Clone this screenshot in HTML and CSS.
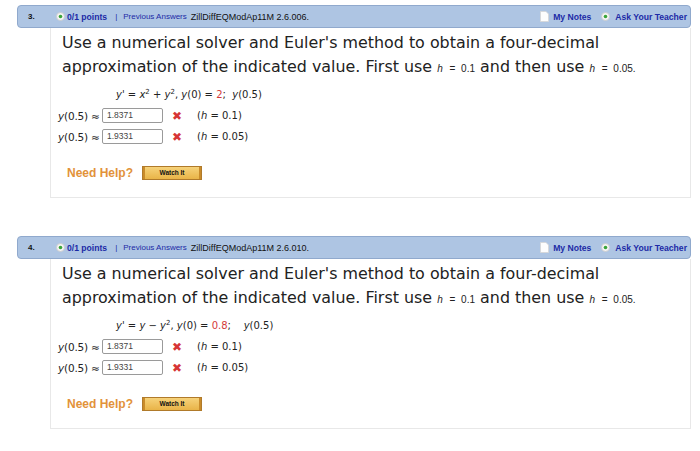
FILE: index.html
```html
<!DOCTYPE html>
<html>
<head>
<meta charset="utf-8">
<link rel="stylesheet" href="styles.css">
</head>
<body>
<div class="question q1">
  <div class="qhead">
    <span class="qnum">3.</span>
    <span class="dot"><svg width="9" height="9" viewBox="0 0 9 9"><circle cx="4.5" cy="4.5" r="4" fill="#f4f4f4" stroke="#c8c8c8" stroke-width="0.8"/><circle cx="4.5" cy="4.5" r="1.8" fill="#3aa53a"/></svg></span>
    <span class="pts">0/1 points</span>
    <span class="sep">|</span>
    <span class="prev">Previous Answers</span>
    <span class="code">ZillDiffEQModAp11M 2.6.006.</span>
    <span class="spacer"></span>
    <span class="note-ic"><svg width="9" height="11" viewBox="0 0 9 11"><path d="M0.5 0.5 H6 L8.5 3 V10.5 H0.5 Z" fill="#fdfdfd" stroke="#d6d6d6" stroke-width="0.8"/></svg></span>
    <span class="link">My Notes</span>
    <span class="dot dot2"><svg width="9" height="9" viewBox="0 0 9 9"><circle cx="4.5" cy="4.5" r="4" fill="#f4f4f4" stroke="#c8c8c8" stroke-width="0.8"/><circle cx="4.5" cy="4.5" r="1.8" fill="#3aa53a"/></svg></span>
    <span class="link">Ask Your Teacher</span>
  </div>
  <div class="qbody">
    <p class="prompt">Use a numerical solver and Euler's method to obtain a four-decimal approximation of the indicated value. First use <span class="hs"><span class="it">h</span> = 0.1</span> and then use <span class="hs"><span class="it">h</span> = 0.05.</span></p>
    <div class="eq"><i>y'</i> = <i>x</i><sup>2</sup> + <i>y</i><sup>2</sup>, <i>y</i>(0) = <span class="red">2</span>;&nbsp; <i>y</i>(0.5)</div>
    <div class="row"><span class="lbl"><i>y</i>(0.5) ≈</span><span class="inp">1.8371</span><span class="x">✖</span><span class="hh">(<i>h</i> = 0.1)</span></div>
    <div class="row"><span class="lbl"><i>y</i>(0.5) ≈</span><span class="inp">1.9331</span><span class="x">✖</span><span class="hh">(<i>h</i> = 0.05)</span></div>
    <div class="help"><span class="need">Need Help?</span><span class="watch">Watch It</span></div>
  </div>
</div>
<div class="question q2">
  <div class="qhead">
    <span class="qnum">4.</span>
    <span class="dot"><svg width="9" height="9" viewBox="0 0 9 9"><circle cx="4.5" cy="4.5" r="4" fill="#f4f4f4" stroke="#c8c8c8" stroke-width="0.8"/><circle cx="4.5" cy="4.5" r="1.8" fill="#3aa53a"/></svg></span>
    <span class="pts">0/1 points</span>
    <span class="sep">|</span>
    <span class="prev">Previous Answers</span>
    <span class="code">ZillDiffEQModAp11M 2.6.010.</span>
    <span class="spacer"></span>
    <span class="note-ic"><svg width="9" height="11" viewBox="0 0 9 11"><path d="M0.5 0.5 H6 L8.5 3 V10.5 H0.5 Z" fill="#fdfdfd" stroke="#d6d6d6" stroke-width="0.8"/></svg></span>
    <span class="link">My Notes</span>
    <span class="dot dot2"><svg width="9" height="9" viewBox="0 0 9 9"><circle cx="4.5" cy="4.5" r="4" fill="#f4f4f4" stroke="#c8c8c8" stroke-width="0.8"/><circle cx="4.5" cy="4.5" r="1.8" fill="#3aa53a"/></svg></span>
    <span class="link">Ask Your Teacher</span>
  </div>
  <div class="qbody">
    <p class="prompt">Use a numerical solver and Euler's method to obtain a four-decimal approximation of the indicated value. First use <span class="hs"><span class="it">h</span> = 0.1</span> and then use <span class="hs"><span class="it">h</span> = 0.05.</span></p>
    <div class="eq"><i>y'</i> = <i>y</i> − <i>y</i><sup>2</sup>, <i>y</i>(0) = <span class="red">0.8</span>;&nbsp;&nbsp;&nbsp; <i>y</i>(0.5)</div>
    <div class="row"><span class="lbl"><i>y</i>(0.5) ≈</span><span class="inp">1.8371</span><span class="x">✖</span><span class="hh">(<i>h</i> = 0.1)</span></div>
    <div class="row"><span class="lbl"><i>y</i>(0.5) ≈</span><span class="inp">1.9331</span><span class="x">✖</span><span class="hh">(<i>h</i> = 0.05)</span></div>
    <div class="help"><span class="need">Need Help?</span><span class="watch">Watch It</span></div>
  </div>
</div>
</body>
</html>
```
FILE: styles.css
```css
body {
  margin: 0;
  background: #ffffff;
  font-family: "Liberation Sans", Arial, sans-serif;
}
.question {
  margin-left: 17px;
  width: 674px;
}
.q1 { margin-top: 5px; }
.q2 { margin-top: 38px; }
.qhead {
  height: 23px;
  box-sizing: border-box;
  background: #aec5e3;
  border: 1px solid #90a9cd;
  border-radius: 4px;
  display: flex;
  align-items: center;
  font-size: 8px;
  padding: 0 3px 0 10px;
}
.qnum { font-weight: bold; color: #111; width: 28px; }
.dot { display: flex; width: 10px; }
.pts { font-weight: bold; color: #1c2aa6; margin-left: 1px; font-size: 8.6px; }
.sep { color: #1c2aa6; margin: 0 6px 0 8px; }
.prev { color: #1c2aa6; }
.code { color: #111; margin-left: 4px; font-size: 9px; }
.spacer { flex: 1; }
.note-ic { display: flex; margin-right: 4px; }
.link { font-weight: bold; color: #1c2aa6; font-size: 8.6px; }
.dot2 { margin-left: 10px; margin-right: 4px; }
.qbody {
  margin-left: 33px;
  border: 1px solid #e8e8e8;
  border-top: none;
  height: 170px;
  box-sizing: border-box;
  padding: 3px 0 0 7px;
  color: #222;
}
.prompt {
  margin: 0;
  padding-left: 4px;
  font-family: "DejaVu Sans", Verdana, sans-serif;
  font-size: 15.9px;
  line-height: 24px;
  width: 610px;
}
.hs {
  font-family: "Liberation Sans", Arial, sans-serif;
  font-size: 10px;
  line-height: 1;
  word-spacing: 3px;
}
.it { font-style: italic; padding-right: 1px; }
.eq {
  font-family: "DejaVu Sans", Verdana, sans-serif;
  font-size: 10px;
  margin: 10px 0 0 58px;
  height: 14px;
}
.eq sup { font-size: 7px; line-height: 0; }
.red { color: #d43a3a; }
.row {
  display: flex;
  align-items: center;
  height: 17px;
  margin-top: 4px;
  font-family: "DejaVu Sans", Verdana, sans-serif;
  font-size: 10px;
}
.lbl { width: 44px; font-size: 10.5px; letter-spacing: -0.2px; }
.inp {
  width: 61px;
  height: 15px;
  box-sizing: border-box;
  border: 1px solid #9a9a9a;
  border-radius: 2px;
  font-family: "Liberation Sans", Arial, sans-serif;
  font-size: 8.5px;
  line-height: 13px;
  padding-left: 4px;
  color: #444;
}
.x { color: #d63535; font-size: 12px; margin-left: 9px; width: 25px; }
.help {
  display: flex;
  align-items: center;
  margin-top: 21px;
  margin-left: 9px;
}
.need { color: #e2923a; font-weight: bold; font-size: 12px; }
.watch {
  margin-left: 9px;
  width: 60px;
  height: 14px;
  box-sizing: border-box;
  border: 1px solid #b07a2a;
  background: linear-gradient(#f6d27a, #e9b448);
  box-shadow: inset 2px 0 0 #c98b2a, inset -2px 0 0 #c98b2a;
  font-size: 6.5px;
  font-weight: bold;
  color: #111;
  text-align: center;
  line-height: 12px;
}
```
